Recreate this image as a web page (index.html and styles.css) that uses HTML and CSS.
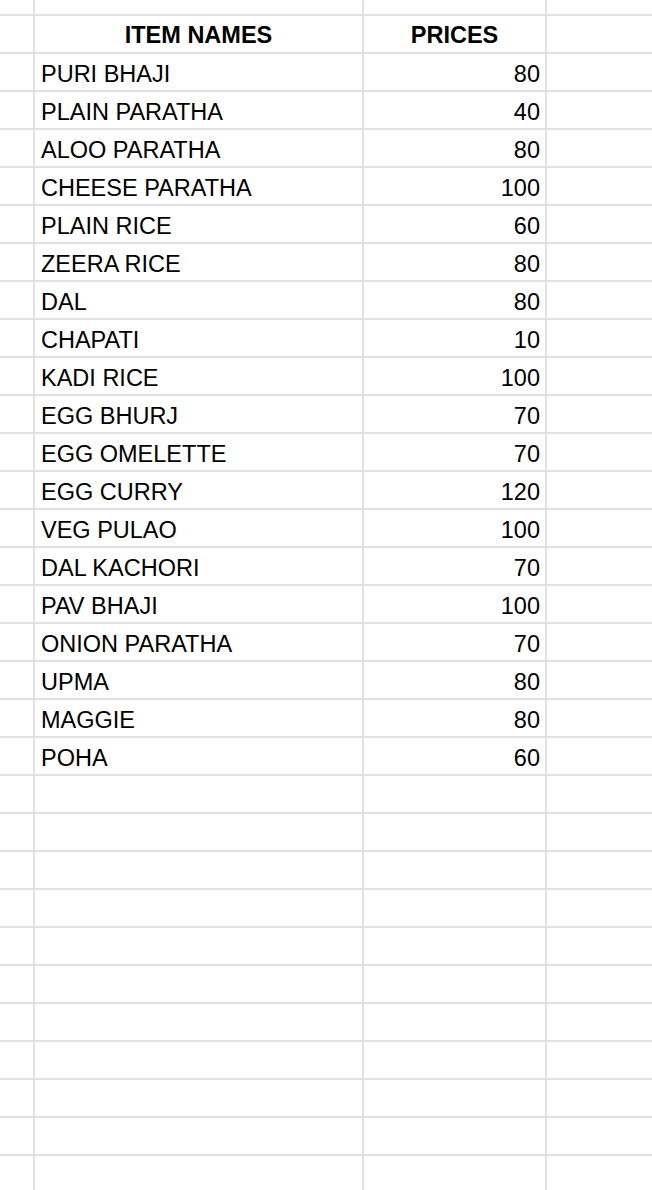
FILE: index.html
```html
<!DOCTYPE html>
<html>
<head>
<meta charset="utf-8">
<link rel="stylesheet" href="styles.css">
</head>
<body>
<div class="sheet">
  <div class="cell top"></div><div class="cell top"></div><div class="cell top"></div><div class="cell top"></div>

  <div class="cell"></div><div class="cell head">ITEM NAMES</div><div class="cell head">PRICES</div><div class="cell"></div>

  <div class="cell"></div><div class="cell name">PURI BHAJI</div><div class="cell price">80</div><div class="cell"></div>
  <div class="cell"></div><div class="cell name">PLAIN PARATHA</div><div class="cell price">40</div><div class="cell"></div>
  <div class="cell"></div><div class="cell name">ALOO PARATHA</div><div class="cell price">80</div><div class="cell"></div>
  <div class="cell"></div><div class="cell name">CHEESE PARATHA</div><div class="cell price">100</div><div class="cell"></div>
  <div class="cell"></div><div class="cell name">PLAIN RICE</div><div class="cell price">60</div><div class="cell"></div>
  <div class="cell"></div><div class="cell name">ZEERA RICE</div><div class="cell price">80</div><div class="cell"></div>
  <div class="cell"></div><div class="cell name">DAL</div><div class="cell price">80</div><div class="cell"></div>
  <div class="cell"></div><div class="cell name">CHAPATI</div><div class="cell price">10</div><div class="cell"></div>
  <div class="cell"></div><div class="cell name">KADI RICE</div><div class="cell price">100</div><div class="cell"></div>
  <div class="cell"></div><div class="cell name">EGG BHURJ</div><div class="cell price">70</div><div class="cell"></div>
  <div class="cell"></div><div class="cell name">EGG OMELETTE</div><div class="cell price">70</div><div class="cell"></div>
  <div class="cell"></div><div class="cell name">EGG CURRY</div><div class="cell price">120</div><div class="cell"></div>
  <div class="cell"></div><div class="cell name">VEG PULAO</div><div class="cell price">100</div><div class="cell"></div>
  <div class="cell"></div><div class="cell name">DAL KACHORI</div><div class="cell price">70</div><div class="cell"></div>
  <div class="cell"></div><div class="cell name">PAV BHAJI</div><div class="cell price">100</div><div class="cell"></div>
  <div class="cell"></div><div class="cell name">ONION PARATHA</div><div class="cell price">70</div><div class="cell"></div>
  <div class="cell"></div><div class="cell name">UPMA</div><div class="cell price">80</div><div class="cell"></div>
  <div class="cell"></div><div class="cell name">MAGGIE</div><div class="cell price">80</div><div class="cell"></div>
  <div class="cell"></div><div class="cell name">POHA</div><div class="cell price">60</div><div class="cell"></div>

  <div class="cell"></div><div class="cell"></div><div class="cell"></div><div class="cell"></div>
  <div class="cell"></div><div class="cell"></div><div class="cell"></div><div class="cell"></div>
  <div class="cell"></div><div class="cell"></div><div class="cell"></div><div class="cell"></div>
  <div class="cell"></div><div class="cell"></div><div class="cell"></div><div class="cell"></div>
  <div class="cell"></div><div class="cell"></div><div class="cell"></div><div class="cell"></div>
  <div class="cell"></div><div class="cell"></div><div class="cell"></div><div class="cell"></div>
  <div class="cell"></div><div class="cell"></div><div class="cell"></div><div class="cell"></div>
  <div class="cell"></div><div class="cell"></div><div class="cell"></div><div class="cell"></div>
  <div class="cell"></div><div class="cell"></div><div class="cell"></div><div class="cell"></div>
  <div class="cell"></div><div class="cell"></div><div class="cell"></div><div class="cell"></div>
  <div class="cell"></div><div class="cell"></div><div class="cell"></div><div class="cell"></div>
</div>
</body>
</html>
```

FILE: styles.css
```css
html, body {
  margin: 0;
  padding: 0;
  background: #ffffff;
  overflow: hidden;
  height: 1190px;
}

.sheet {
  display: grid;
  grid-template-columns: 33px 327px 181px 1fr;
  grid-template-rows: 14px;
  grid-auto-rows: 36px;
  gap: 2px;
  background: #e1e1e1;
  font-family: "Liberation Sans", Arial, sans-serif;
  font-size: 23.5px;
  color: #000000;
}

.cell {
  background: #ffffff;
  box-sizing: border-box;
  padding-top: 4px;
  line-height: 32px;
  white-space: nowrap;
  overflow: hidden;
}

.top {
  padding: 0;
}

.head {
  font-weight: bold;
  text-align: center;
  padding-top: 3px;
}

.name {
  padding-left: 6px;
}

.price {
  text-align: right;
  padding-right: 5px;
}
```
